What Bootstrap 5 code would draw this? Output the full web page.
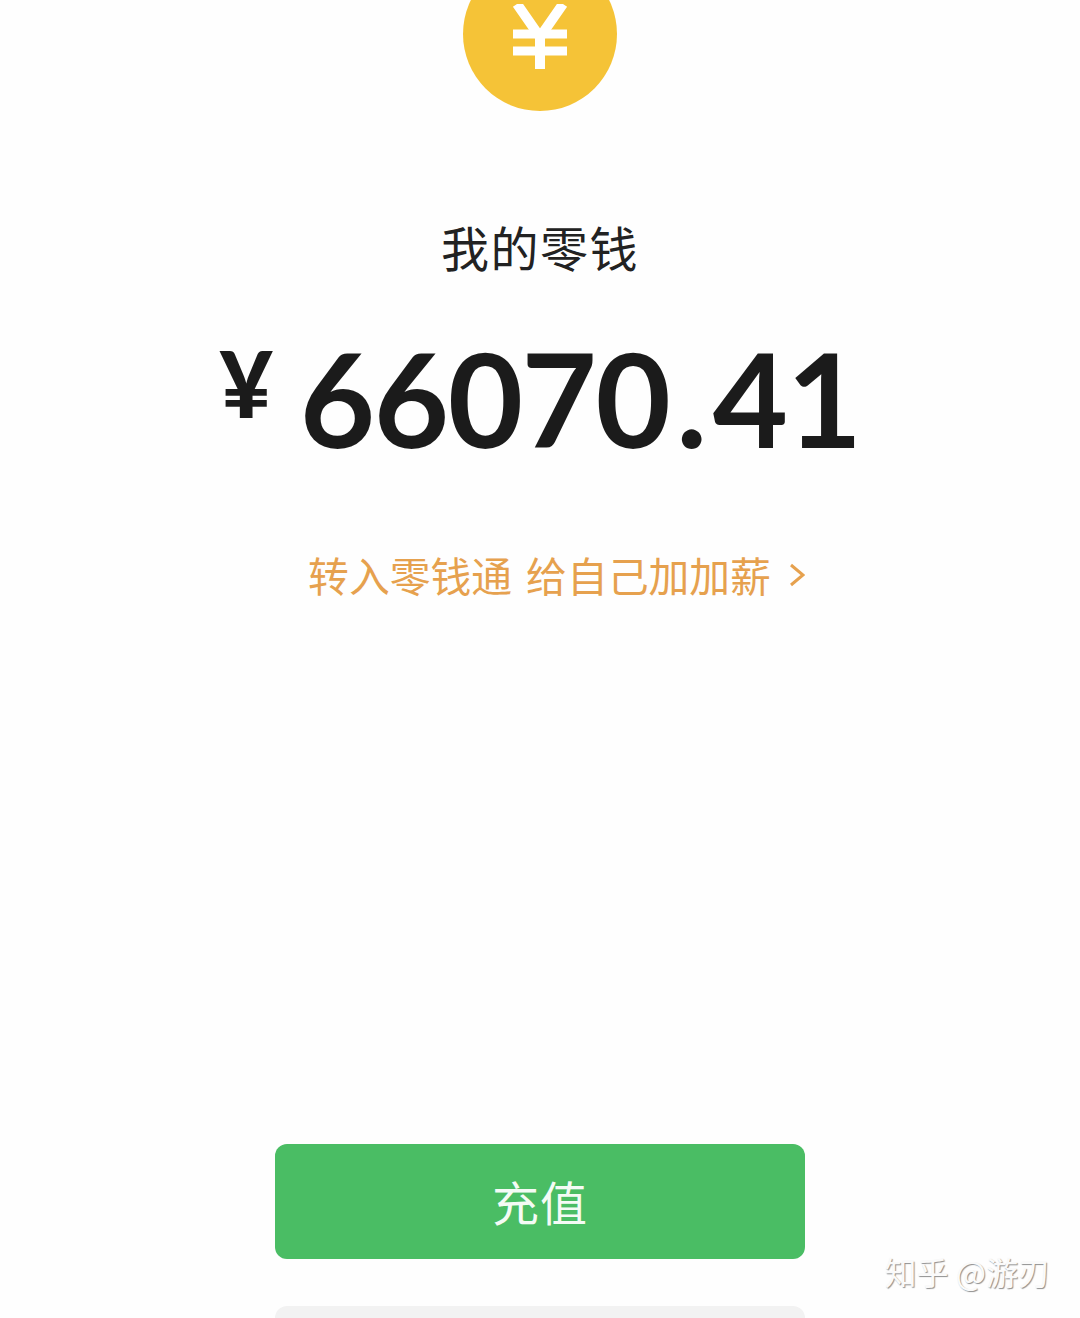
<!DOCTYPE html>
<html lang="zh-CN">
<head>
    <meta charset="UTF-8">
    <meta name="viewport" content="width=device-width, initial-scale=1.0">
    <title>我的零钱</title>
    <link href="https://cdn.jsdelivr.net/npm/bootstrap@5.3.0/dist/css/bootstrap.min.css" rel="stylesheet">
    <style>
        html, body { height: 1318px; overflow: hidden; }
        body { background: #fefefe; font-family: "Noto Sans CJK SC", "Liberation Sans", sans-serif; color: #1b1b1b; }
        .page-wrap { height: 1318px; }
        .coin { width: 154px; height: 154px; margin-top: -43px; background: #f5c337; border-radius: 50%; }
        .coin svg { margin-top: 47px; }
        .wallet-title { margin-top: 100px; font-size: 48px; line-height: 70px; letter-spacing: 1.5px; color: #222; }
        .amount-row { margin-top: 53px; height: 130px; }
        .amount-sign { font-family: Lato, sans-serif; font-weight: 900; font-size: 92px; line-height: 1; margin-right: 27px; margin-top: -33px; }
        .amount-num { font-family: Lato, sans-serif; font-weight: 700; font-size: 130px; line-height: 130px; letter-spacing: -1.5px; margin-top: -3px; }
        .amount-dot { margin: 0 7px; }
        .promo { margin-top: 81px; font-size: 40.8px; line-height: 60px; color: #e6a14e; padding-left: 33px; }
        .promo-gap { width: 14px; }
        .promo svg { margin-left: 18px; margin-top: 0; }
        .spacer { flex: 1; }
        .btn-wallet { width: 530px; border: 0; flex-shrink: 0; }
        .btn-green { height: 115px; border-radius: 12px; font-size: 47px; letter-spacing: 1px; background: #4abd64; color: #f4fbf5; }
        .btn-green:hover { background: #4abd64; color: #f4fbf5; }
        .btn-grey { height: 12px; margin-top: 47px; border-radius: 12px 12px 0 0; background: #f2f2f2; }
        .watermark { right: 30px; top: 1249px; font-size: 32px; line-height: 44px; color: #fafafa; text-shadow: 1px 1px 1px #8f8f8f; }
    </style>
</head>
<body>
    <div class="page-wrap d-flex flex-column align-items-center position-relative">
        <div class="coin d-flex justify-content-center flex-shrink-0">
            <svg width="58" height="66" viewBox="0 0 58 66" fill="none" stroke="#fff">
                <path d="M6 0 L29 33 L52 0" stroke-width="10"/>
                <path d="M2 30 H56 M2 47 H56" stroke-width="9"/>
                <path d="M29 28 V65" stroke-width="10"/>
            </svg>
        </div>

        <div class="wallet-title">我的零钱</div>

        <div class="amount-row d-flex align-items-center justify-content-center">
            <span class="amount-sign">¥</span>
            <span class="amount-num">66070<span class="amount-dot">.</span>41</span>
        </div>

        <div class="promo d-flex align-items-center">
            <span>转入零钱通</span>
            <span class="promo-gap"></span>
            <span>给自己加加薪</span>
            <svg width="16" height="24" viewBox="0 0 16 24" fill="none" stroke="#e6a14e" stroke-width="3">
                <path d="M2 2 L14 12 L2 22"/>
            </svg>
        </div>

        <div class="spacer"></div>

        <button type="button" class="btn btn-wallet btn-green">充值</button>
        <div class="btn-wallet btn-grey"></div>

        <div class="watermark position-absolute">知乎 @游刃</div>
    </div>
    <script src="https://cdn.jsdelivr.net/npm/bootstrap@5.3.0/dist/js/bootstrap.bundle.min.js"></script>
</body>
</html>
